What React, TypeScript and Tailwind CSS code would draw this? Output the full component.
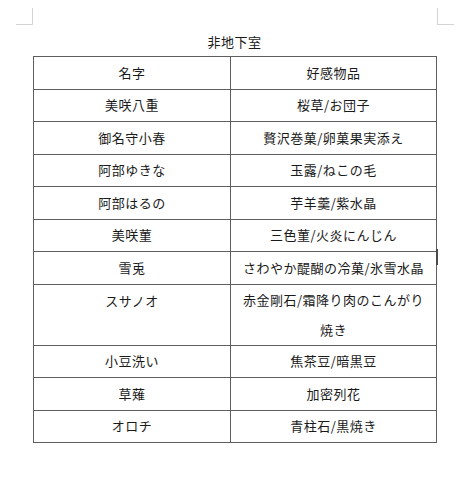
const ROWS: [string, string[]][] = [
  ["美咲八重", ["桜草/お団子"]],
  ["御名守小春", ["贅沢巻菓/卵菓果実添え"]],
  ["阿部ゆきな", ["玉露/ねこの毛"]],
  ["阿部はるの", ["芋羊羹/紫水晶"]],
  ["美咲菫", ["三色菫/火炎にんじん"]],
  ["雪兎", ["さわやか醍醐の冷菓/氷雪水晶"]],
  ["スサノオ", ["赤金剛石/霜降り肉のこんがり", "焼き"]],
  ["小豆洗い", ["焦茶豆/暗黒豆"]],
  ["草薙", ["加密列花"]],
  ["オロチ", ["青柱石/黒焼き"]],
];

const cell = "border border-[#5e5e5e] text-center align-middle p-0";

export default function App() {
  return (
    <div
      className="w-[474px] h-[481px] bg-white text-[#1a1a1a] text-[13px] tracking-[0.5px]"
      style={{ fontFamily: '"Noto Sans CJK JP", "Noto Sans CJK SC", sans-serif' }}
    >
      {/* page corner marks */}
      <div className="flex justify-between w-[438px] ml-[16px] pt-[8px]">
        <div className="w-[17px] h-[17px] border-r border-b border-[#d4d4d4]" />
        <div className="w-[17px] h-[17px] border-l border-b border-[#d4d4d4]" />
      </div>

      <div className="w-[403px] ml-[33px]">
        <p className="h-[31px] pt-[7px] leading-[20px] text-center">非地下室</p>

        <div className="relative">
          <table className="w-[403px] border-collapse table-fixed">
            <colgroup>
              <col className="w-[197px]" />
              <col className="w-[206px]" />
            </colgroup>
            <tbody>
              <tr className="h-[32.5px]">
                <td className={cell}>名字</td>
                <td className={cell}>好感物品</td>
              </tr>
              {ROWS.map(([name, gifts]) => (
                <tr key={name} className={gifts.length > 1 ? "h-[61px]" : "h-[32.5px]"}>
                  <td className={`${cell} ${gifts.length > 1 ? "align-top pt-[1px]" : ""}`}>
                    <div className="leading-[30px]">{name}</div>
                  </td>
                  <td className={cell}>
                    {gifts.map((g) => (
                      <div key={g} className="leading-[30px]">
                        {g}
                      </div>
                    ))}
                  </td>
                </tr>
              ))}
            </tbody>
          </table>
          <span className="absolute left-[403px] top-[193px] w-[2px] h-[16px] bg-[#4a4a4a]" />
        </div>
      </div>
    </div>
  );
}
